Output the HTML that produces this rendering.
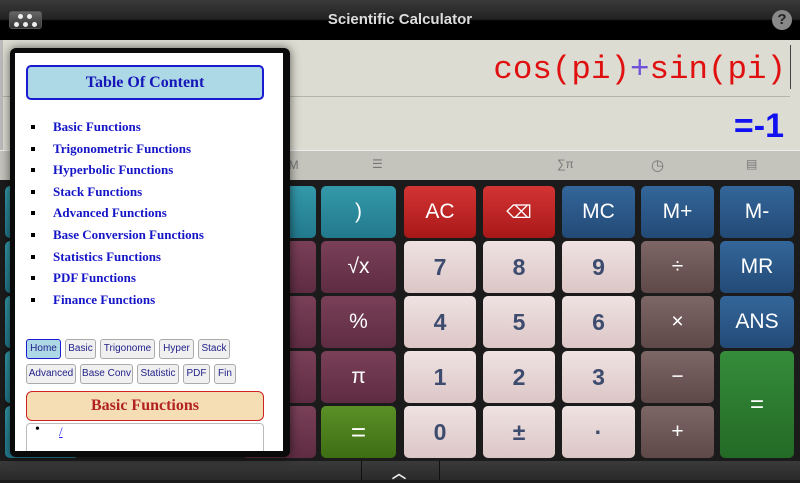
<!DOCTYPE html>
<html><head><style>
*{margin:0;padding:0;box-sizing:border-box}
body{width:800px;height:480px;overflow:hidden;background:#1b1b1b;position:relative;font-family:"Liberation Sans",sans-serif}
.top{position:absolute;left:0;top:0;width:800px;height:40px;background:linear-gradient(#3a3a3a,#222 48%,#000 52%,#000);}
.title{position:absolute;left:0;width:800px;top:11px;text-align:center;color:#ddd;font-weight:bold;font-size:15px}
.menu{position:absolute;left:9px;top:11px;width:33px;height:18px;border-radius:3px;background:linear-gradient(#666,#333);border:1px solid #555}
.menu i{position:absolute;width:5px;height:5px;border-radius:50%;background:#eee}
.help{position:absolute;left:772px;top:10px;width:20px;height:20px;border-radius:50%;background:#888;color:#222;font-weight:bold;font-size:15px;text-align:center;line-height:20px}
.disp{position:absolute;left:0;top:40px;width:800px;height:110px;background:#dddcd2;border-left:3px solid #bbb}
.line{position:absolute;left:0;top:56px;width:787px;height:1px;background:#b5b5aa}
.expr{position:absolute;right:14px;top:10px;font-family:"Liberation Mono",monospace;font-size:32.5px;color:#e01010;line-height:40px}
.cur{position:absolute;left:787px;top:5px;width:1px;height:44px;background:#444}
.res{position:absolute;right:16px;top:66px;font-size:34px;font-weight:bold;color:#1010f0;line-height:40px}
.tool{position:absolute;left:0;top:150px;width:800px;height:30px;background:#c4c4bc;border-top:1px solid #eee;color:#777;font-size:12px}
.b{position:absolute;width:74px;height:52px;border-radius:5px;text-align:center;line-height:52px;font-size:21px;color:#fff}
.t{background:linear-gradient(#3399aa,#22798c)}
.m{background:linear-gradient(#7a4058,#5e2c42)}
.r{background:linear-gradient(#d43434,#a81818)}
.u{background:linear-gradient(#33669a,#234a76)}
.d{background:linear-gradient(#efe2e2,#dcc6c6);color:#3d4c6e;font-weight:bold;font-size:23px}
.o{background:linear-gradient(#7e6666,#5e4848)}
.g{background:linear-gradient(#358c3a,#236a26)}
.g2{background:linear-gradient(#5a9026,#3e6e14)}
.bot{position:absolute;left:0;top:461px;width:800px;height:19px;background:linear-gradient(#3a3a3a,#2a2a2a)}
.panel{position:absolute;left:10px;top:48px;width:280px;height:409px;background:#0a0a0a;border-radius:6px;box-shadow:0 0 10px rgba(0,0,0,.6)}
.inner{position:absolute;left:5px;top:5px;width:268px;height:398px;background:#fff;overflow:hidden;font-family:"Liberation Serif",serif}
.toc{position:absolute;left:11px;top:12px;width:238px;height:35px;background:#add8e6;border:2px solid #1a1ad0;border-radius:5px;text-align:center;line-height:31px;color:#1515b8;font-weight:bold;font-size:16px}
ul{position:absolute;left:16px;top:66px;list-style:none}
li{height:21.6px;font-size:13px;font-weight:bold;color:#1515c8;padding-left:22px;position:relative}
li:before{content:"";position:absolute;left:0;top:6px;width:4px;height:4px;background:#000}
.btn{position:absolute;height:20px;border:1px solid #aaa;border-radius:3px;background:#f0f0f0;font-family:"Liberation Sans",sans-serif;font-size:10px;color:#22228a;line-height:18px;text-align:center;white-space:nowrap;overflow:hidden}
.bf{position:absolute;left:11px;top:338px;width:238px;height:30px;background:#f5deb3;border:1px solid #c22;border-radius:6px;text-align:center;line-height:28px;color:#b22222;font-weight:bold;font-size:16px}
.box{position:absolute;left:11px;top:370px;width:238px;height:40px;border:1px solid #bbb;border-radius:4px}
</style></head><body>
<div class="top"><div class="menu"><i style="left:8px;top:2px"></i><i style="left:17px;top:2px"></i><i style="left:4px;top:10px"></i><i style="left:13px;top:10px"></i><i style="left:22px;top:10px"></i></div>
<div class="title">Scientific Calculator</div><div class="help">?</div></div>
<div class="disp"><div class="line"></div>
<div class="expr">cos(pi)<span style="color:#7050d8">+</span>sin(pi)</div><div class="cur"></div>
<div class="res">=-1</div></div>
<div class="tool"><span style="position:absolute;left:280px;top:7px">RM</span><span style="position:absolute;left:372px;top:6px">☰</span><span style="position:absolute;left:557px;top:6px">∑π</span><span style="position:absolute;left:651px;top:5px;font-size:15px">◷</span><span style="position:absolute;left:746px;top:6px">▤</span></div>

<div class="b t" style="left:5px;top:186px"></div><div class="b t" style="left:84px;top:186px"></div><div class="b t" style="left:163px;top:186px"></div><div class="b t" style="left:242px;top:186px"></div>
<div class="b t" style="left:5px;top:241px"></div><div class="b t" style="left:5px;top:296px"></div><div class="b t" style="left:5px;top:351px"></div><div class="b t" style="left:5px;top:406px"></div>
<div class="b m" style="left:242px;top:241px;text-align:right;padding-right:50px">²</div>
<div class="b m" style="left:242px;top:296px"></div><div class="b m" style="left:242px;top:351px"></div><div class="b m" style="left:242px;top:406px"></div>

<div class="b t" style="left:321px;top:186px;width:75px">)</div>
<div class="b m" style="left:321px;top:241px;width:75px">√x</div>
<div class="b m" style="left:321px;top:296px;width:75px">%</div>
<div class="b m" style="left:321px;top:351px;width:75px">π</div>
<div class="b g2" style="left:321px;top:406px;width:75px;font-size:26px">=</div>

<div class="b r" style="left:404px;top:186px;width:72px">AC</div>
<div class="b r" style="left:483px;top:186px;width:72px;font-size:18px">⌫</div>
<div class="b u" style="left:562px;top:186px;width:73px">MC</div>
<div class="b u" style="left:641px;top:186px;width:73px">M+</div>
<div class="b u" style="left:720px;top:186px;width:74px">M-</div>

<div class="b d" style="left:404px;top:241px;width:72px">7</div><div class="b d" style="left:483px;top:241px;width:72px">8</div><div class="b d" style="left:562px;top:241px;width:73px">9</div><div class="b o" style="left:641px;top:241px;width:73px">÷</div><div class="b u" style="left:720px;top:241px;width:74px">MR</div>
<div class="b d" style="left:404px;top:296px;width:72px">4</div><div class="b d" style="left:483px;top:296px;width:72px">5</div><div class="b d" style="left:562px;top:296px;width:73px">6</div><div class="b o" style="left:641px;top:296px;width:73px">×</div><div class="b u" style="left:720px;top:296px;width:74px">ANS</div>
<div class="b d" style="left:404px;top:351px;width:72px">1</div><div class="b d" style="left:483px;top:351px;width:72px">2</div><div class="b d" style="left:562px;top:351px;width:73px">3</div><div class="b o" style="left:641px;top:351px;width:73px">−</div>
<div class="b g" style="left:720px;top:351px;width:74px;height:107px;line-height:107px;font-size:24px">=</div>
<div class="b d" style="left:404px;top:406px;width:72px">0</div><div class="b d" style="left:483px;top:406px;width:72px">±</div><div class="b d" style="left:562px;top:406px;width:73px">·</div><div class="b o" style="left:641px;top:406px;width:73px">+</div>

<div class="bot"><div style="position:absolute;left:361px;top:0;width:1px;height:19px;background:#111"></div><div style="position:absolute;left:439px;top:0;width:1px;height:19px;background:#111"></div><div style="position:absolute;left:392px;top:2px;color:#eee;font-size:14px;font-weight:bold">︿</div></div>

<div class="panel"><div class="inner">
<div class="toc">Table Of Content</div>
<ul><li>Basic Functions</li><li>Trigonometric Functions</li><li>Hyperbolic Functions</li><li>Stack Functions</li><li>Advanced Functions</li><li>Base Conversion Functions</li><li>Statistics Functions</li><li>PDF Functions</li><li>Finance Functions</li></ul>
<div class="btn" style="left:11px;top:286px;width:35px;background:#add8e6;border-color:#1a1ad0">Home</div>
<div class="btn" style="left:50px;top:286px;width:31px">Basic</div>
<div class="btn" style="left:85px;top:286px;width:55px">Trigonome</div>
<div class="btn" style="left:144px;top:286px;width:35px">Hyper</div>
<div class="btn" style="left:183px;top:286px;width:32px">Stack</div>
<div class="btn" style="left:11px;top:311px;width:50px">Advanced</div>
<div class="btn" style="left:65px;top:311px;width:53px">Base Conv</div>
<div class="btn" style="left:122px;top:311px;width:42px">Statistic</div>
<div class="btn" style="left:168px;top:311px;width:27px">PDF</div>
<div class="btn" style="left:199px;top:311px;width:22px">Fin</div>
<div class="bf">Basic Functions</div>
<div class="box"><span style="position:absolute;left:8px;top:-2px;font-size:14px">•</span><span style="position:absolute;left:32px;top:0;color:#22f;font-size:13px;text-decoration:underline">/</span></div>
</div></div>
</body></html>
